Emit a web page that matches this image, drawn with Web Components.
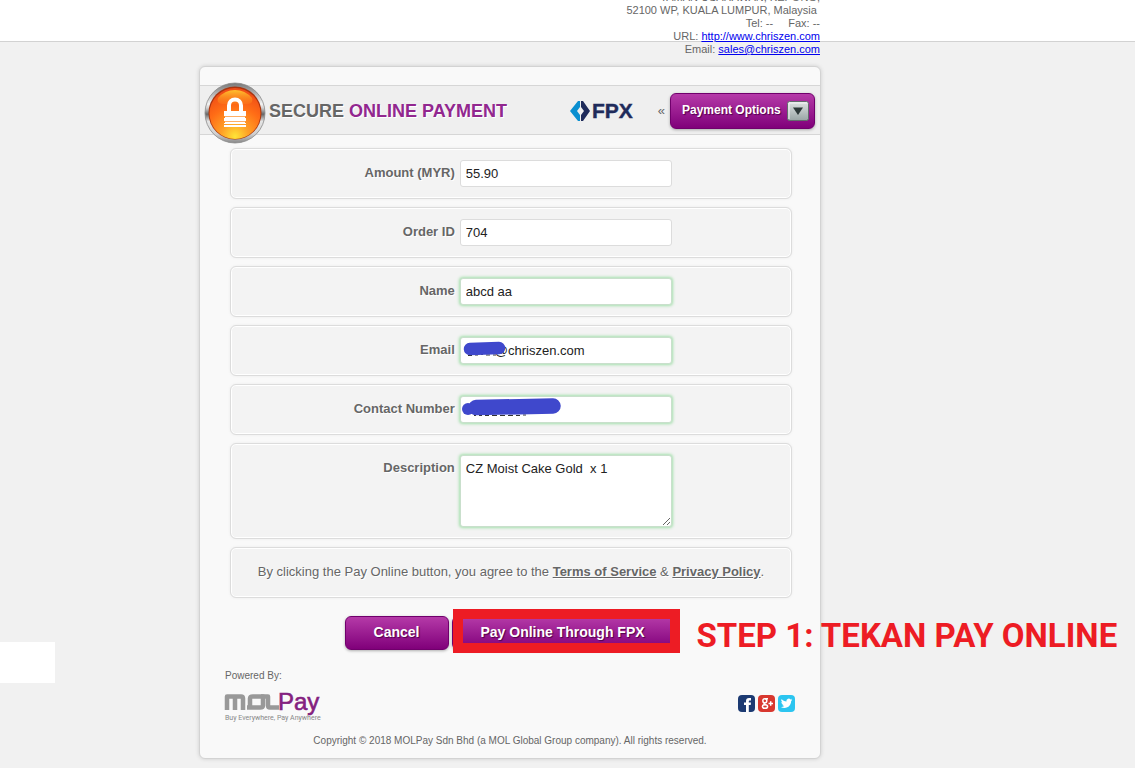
<!DOCTYPE html>
<html lang="en">
<head>
<meta charset="utf-8">
<meta name="viewport" content="width=device-width, initial-scale=1">
<title>Secure Online Payment</title>
<style>
  html { background: #f1f1f1; }
  body {
    margin: 0;
    color: #666;
    font: 13px/16px "Liberation Sans", Arial, sans-serif;
    background: linear-gradient(#fff 41px, #d2d2d2 41px, #d2d2d2 42px, #f1f1f1 42px);
    overflow-x: hidden;
  }
</style>
</head>
<body>
<pay-page>
  <merchant-info></merchant-info>
  <pay-card>
    <card-heading></card-heading>
    <form-row label="Amount (MYR)" value="55.90"></form-row>
    <form-row label="Order ID" value="704"></form-row>
    <form-row label="Name" value="abcd aa" valid></form-row>
    <form-row label="Email" value="@chriszen.com" valid masked>
      <svg width="52" height="18" viewBox="0 0 52 18" aria-hidden="true"><path d="M8 14.500h4M15 14h3M21 13.500h2M26 14h4M33 14h3" stroke="#333"/><path d="M10 8L39 7" stroke="#3f48cc" stroke-width="12.500" stroke-linecap="round"/></svg>
    </form-row>
    <form-row label="Contact Number" value="" valid>
      <svg width="110" height="24" viewBox="0 0 110 24" aria-hidden="true"><path d="M14 15.500h2M19 15.500h3M25 15.500h4M32 15.500h5M40 15.500h5M48 15.500h5M56 15.500h4M63 15h3" stroke="#333"/><path d="M16 7.500L93 6" stroke="#3f48cc" stroke-width="15.500" stroke-linecap="round" fill="none"/><circle cx="8" cy="9" r="6" fill="#3f48cc"/></svg>
    </form-row>
    <form-row label="Description" value="CZ Moist Cake Gold  x 1" valid multiline></form-row>
    <agree-row></agree-row>
    <pay-actions><step-note>STEP 1: TEKAN PAY ONLINE</step-note></pay-actions>
    <card-footer></card-footer>
  </pay-card>
</pay-page>
<side-tab></side-tab>

<script>
function define(name, html, setup) {
  customElements.define(name, class extends HTMLElement {
    constructor() {
      super();
      this.attachShadow({ mode: 'open' }).innerHTML = html;
    }
    connectedCallback() {
      if (setup && !this.ready) { this.ready = true; setup(this, this.shadowRoot); }
    }
  });
}

const buttonCss = `
  button {
    box-sizing: border-box; margin: 0; color: #fff; border: 1px solid #70006c; border-radius: 6px;
    background: linear-gradient(#b53aa8, #80007a);
    font: bold 14px/16px "Liberation Sans", Arial, sans-serif;
    text-shadow: 1px 1px 1px #50004c; box-shadow: 0 1px 3px rgba(0,0,0,.3); cursor: pointer;
  }`;

define('pay-page', `
  <style>
    :host { display: block; padding: 0 115px 10px 0; }
    div { max-width: 622px; margin: 0 auto; }
  </style>
  <div><slot></slot></div>`);

define('merchant-info', `
  <style>
    :host { display: block; margin: -9px 0 10px; padding-right: 1px; text-align: right; font-size: 11px; line-height: 13px; }
    address { font-style: normal; }
    a { color: #00e; }
    .gap { padding-left: 12px; }
  </style>
  <address>
    TAMAN USAHAWAN, KEPONG,<br>
    52100 WP, KUALA LUMPUR, Malaysia&nbsp;<br>
    Tel: -- <span class="gap">Fax: --</span><br>
    URL: <a href="http://www.chriszen.com">http://www.chriszen.com</a><br>
    Email: <a href="mailto:sales@chriszen.com">sales@chriszen.com</a>
  </address>`);

define('pay-card', `
  <style>
    :host {
      display: block; box-sizing: border-box; padding-top: 18px; background: #f9f9f9;
      border: 1px solid #d3d3d3; border-radius: 6px; box-shadow: 0 0 4px rgba(0,0,0,.15);
    }
  </style>
  <slot></slot>`);

define('card-heading', `
  <style>
    :host {
      display: flex; align-items: center; box-sizing: border-box; height: 50px; margin-bottom: 13px; padding: 2px 5px 0;
      background: #efefef; border: solid #d6d6d6; border-width: 1px 0;
    }
    .lock { flex: none; margin: 0 3px 0 -1px; position: relative; top: 2px; }
    h1 { margin: 0 auto 0 0; font-size: 18px; line-height: 24px; text-shadow: 1px 1px 0 #fff; white-space: nowrap; }
    h1 span { color: #92278f; }
    .fpx { flex: none; margin-right: 24px; }
    .back { margin-right: 5px; font-size: 13px; }
    ${buttonCss}
    button { display: flex; align-items: center; justify-content: space-between; width: 145px; height: 36px; padding: 0 5px 0 11px; font-size: 12px; }
    button span { padding-bottom: 2px; }
  </style>
  <svg class="lock" width="62" height="62" viewBox="0 0 62 62" aria-hidden="true">
    <defs>
      <linearGradient id="rim" x1="0" y1="0" x2="0" y2="1"><stop offset="0" stop-color="#777"/><stop offset=".15" stop-color="#aaa"/><stop offset=".35" stop-color="#f4f4f4"/><stop offset=".42" stop-color="#ccc"/><stop offset=".52" stop-color="#666"/><stop offset=".64" stop-color="#e4e4e4"/><stop offset=".85" stop-color="#d0d0d0"/><stop offset="1" stop-color="#888"/></linearGradient>
      <radialGradient id="disc" cx=".5" cy=".95" r=".9"><stop offset="0" stop-color="#ffe437"/><stop offset=".3" stop-color="#ffa126"/><stop offset=".65" stop-color="#ff6d16"/><stop offset="1" stop-color="#f04d16"/></radialGradient>
      <linearGradient id="gloss" x1="0" y1="0" x2="0" y2="1"><stop offset="0" stop-color="#ffc22e"/><stop offset="1" stop-color="#ff8a1c" stop-opacity=".3"/></linearGradient>
    </defs>
    <circle cx="31" cy="31" r="30" fill="url(#rim)" stroke="#8a8a8a" stroke-width=".8"/>
    <circle cx="31" cy="31" r="26.500" fill="#a9340f"/>
    <circle cx="31" cy="31.500" r="25.500" fill="url(#disc)"/>
    <path d="M14 16Q21 8 31 8T48 16Q50 21 44 22H18Q12 21 14 16Z" fill="url(#gloss)"/>
    <path d="M25 30V23.500A6 6 0 0 1 37 23.500V30" fill="none" stroke="#fff" stroke-width="4"/>
    <path d="M20 29h22v5h-1v2h1v3h-1v2h1v1H20v-1h1v-2h-1v-3h1v-2h-1zM20 43h22v2H20z" fill="#fff"/>
    <path d="M20 34.500h22M20 39.500h22" stroke="#ff9a3c" stroke-width=".8"/>
  </svg>
  <h1>SECURE <span>ONLINE PAYMENT</span></h1>
  <svg class="fpx" width="64" height="24" viewBox="0 0 64 24" role="img" aria-label="FPX">
    <path d="M8 2H10V8L7 12L10 16V22H8L0 12Z" fill="#0a8fd0"/>
    <path d="M13 2H11V8L14 12L11 16V22H13L20 12Z" fill="#1f2b5b"/>
    <text x="22" y="19" font-family="Liberation Sans, Arial, sans-serif" font-weight="bold" font-size="21" fill="#1f2b5b" stroke="#1f2b5b" stroke-width=".4">FPX</text>
  </svg>
  <span class="back">«</span>
  <button type="button"><span>Payment Options</span>
    <svg width="22" height="20" viewBox="0 0 22 20" aria-hidden="true">
      <defs><linearGradient id="key" x1="0" y1="0" x2="0" y2="1"><stop offset="0" stop-color="#dfe3e3"/><stop offset="1" stop-color="#99a5a5"/></linearGradient></defs>
      <rect x=".5" y=".5" width="21" height="19" rx="2" fill="url(#key)" stroke="#626c6c"/>
      <path d="M2 18V2H20" fill="none" stroke="#f4f6f6"/>
      <path d="M6 6.500H16L11 14Z" fill="#2d3838"/>
    </svg>
  </button>`);

const rowCss = `
  :host {
    display: block; box-sizing: border-box; min-height: 51px; margin: 0 28px 8px 30px;
    background: #f3f3f3; border: 1px solid #dcdcdc; border-radius: 6px;
    box-shadow: inset 0 0 0 1px #fff, 0 0 3px rgba(0,0,0,.06); text-shadow: 1px 1px 0 #fff;
  }`;

define('form-row', `
  <style>
    ${rowCss}
    .grid { display: grid; grid-template-columns: 2fr 3fr; column-gap: 5px; padding: 11px 0 11px 3px; }
    label { padding-top: 5px; text-align: right; font-weight: bold; }
    .box { position: relative; width: 212px; }
    .field {
      display: block; box-sizing: border-box; width: 100%; height: 27px; margin: 0; padding: 0 5px;
      border: 1px solid #dcdcdc; border-radius: 3px; outline: 0; background: #fff; color: #222;
      font: 13px/16px "Liberation Sans", Arial, sans-serif;
    }
    textarea.field { height: 72px; padding: 5px; resize: both; }
    :host([valid]) .field { box-shadow: 0 0 3px 1px #a5e0ad; border-color: #c9dfcc; }
    :host([masked]) .field { padding-left: 34px; }
    ::slotted(svg) { position: absolute; left: 0; top: 4px; overflow: visible; }
  </style>
  <div class="grid"><label for="f"></label><div class="box"><slot></slot></div></div>`,
  (host, root) => {
    const multi = host.hasAttribute('multiline');
    const field = document.createElement(multi ? 'textarea' : 'input');
    field.id = 'f';
    field.className = 'field';
    if (!multi) field.type = 'text';
    field.value = host.getAttribute('value');
    root.querySelector('label').textContent = host.getAttribute('label');
    root.querySelector('.box').prepend(field);
  });

define('agree-row', `
  <style>
    ${rowCss}
    p { margin: 0; padding: 16px 8px; text-align: center; }
    a { color: #666; font-weight: bold; }
  </style>
  <p>By clicking the Pay Online button, you agree to the <a href="#terms">Terms of Service</a> &amp; <a href="#privacy">Privacy Policy</a>.</p>`);

define('pay-actions', `
  <style>
    :host { display: flex; justify-content: center; gap: 3px; margin-top: 18px; padding-right: 2px; }
    ${buttonCss}
    button { height: 34px; padding: 0 6px 2px; }
    .cancel { width: 104px; }
    .pay { width: 222px; }
    .target { position: relative; }
    .frame { position: absolute; left: 1px; top: -7px; box-sizing: border-box; width: 227px; height: 44px; border: 10px solid #ed1c24; pointer-events: none; }
  </style>
  <button class="cancel" type="button">Cancel</button>
  <div class="target"><button class="pay" type="submit">Pay Online Through FPX</button><div class="frame"></div><slot></slot></div>`);

define('step-note', `
  <style>
    :host {
      position: absolute; left: 245px; top: -2px; color: #ed1c24; white-space: nowrap;
      font: bold 33px/44px Roboto, "Liberation Sans", sans-serif;
    }
  </style>
  <slot></slot>`);

define('card-footer', `
  <style>
    :host { display: block; padding: 18px 25px 9px; font-size: 10px; line-height: 16px; }
    .row { display: flex; align-items: flex-start; justify-content: space-between; margin-top: 8px; }
    nav { display: flex; gap: 3px; padding: 3px 0 0; }
    a, svg { display: block; overflow: visible; }
    p { margin: 0; }
    .copy { margin-top: 9px; text-align: center; }
  </style>
  <p>Powered By:</p>
  <div class="row">
    <svg width="104" height="32" viewBox="0 0 104 32" role="img" aria-label="MOLPay">
      <g fill="none" stroke="#999" stroke-width="4.500" stroke-linejoin="round">
        <path d="M2 18V4.500H16Q18 4.500 18 6.500V18M10 4.500V18"/>
        <path d="M25 15.500V6.500Q25 4.500 28 4.500H38V13.500Q38 15.500 35 15.500H22"/>
        <path d="M36 4.500H43V13.500Q43 15.500 45 15.500H54"/>
      </g>
      <text x="53" y="18" font-family="Liberation Sans, Arial, sans-serif" font-size="24" fill="#84217f" stroke="#84217f" stroke-width=".6">Pay</text>
      <text x="0" y="28" font-family="Roboto, sans-serif" font-size="7" fill="#888">Buy Everywhere, Pay Anywhere</text>
    </svg>
    <nav>
      <a href="#facebook" aria-label="Facebook"><svg width="17" height="17" viewBox="0 0 17 17"><rect width="17" height="17" rx="4" fill="#1c3a72"/><path d="M8 17V10H6V7.500H8V6Q8 3 11 3H13V5.500H11.500Q10.800 5.500 10.800 6.300V7.500H13L12.700 10H10.800V17Z" fill="#fff"/></svg></a>
      <a href="#google" aria-label="Google Plus"><svg width="17" height="17" viewBox="0 0 17 17"><rect width="17" height="17" rx="4" fill="#d8382f"/><g fill="none" stroke="#fff" stroke-width="1.500"><ellipse cx="6.800" cy="5.800" rx="2" ry="2.100"/><path d="M7 3.700H10M7 8Q5 9 7.500 9.800"/><ellipse cx="7" cy="11.500" rx="2.600" ry="1.800"/><path d="M10.500 8.500H15M12.700 6.300V10.700"/></g></svg></a>
      <a href="#twitter" aria-label="Twitter"><svg width="17" height="17" viewBox="0 0 17 17"><rect width="17" height="17" rx="4" fill="#2cc5f0"/><path transform="translate(2.800 2.600) scale(.48)" fill="#fff" d="M23.950 4.570a10 10 0 0 1-2.820.77 4.960 4.960 0 0 0 2.160-2.720c-.95.550-2 .960-3.130 1.180a4.920 4.920 0 0 0-8.380 4.480C7.690 8.090 4.070 6.130 1.640 3.160a4.920 4.920 0 0 0 1.520 6.570 4.900 4.900 0 0 1-2.230-.61v.06c0 2.380 1.700 4.370 3.950 4.830a5 5 0 0 1-2.210.08 4.940 4.940 0 0 0 4.600 3.420A9.870 9.870 0 0 1 0 19.540a13.990 13.990 0 0 0 7.550 2.210c9.050 0 14-7.500 14-13.980v-.64a9.900 9.900 0 0 0 2.400-2.560z"/></svg></a>
    </nav>
  </div>
  <p class="copy">Copyright © 2018 MOLPay Sdn Bhd (a MOL Global Group company). All rights reserved.</p>`);

define('side-tab', `
  <style>:host { position: absolute; left: 0; top: 642px; width: 55px; height: 41px; background: #fff; }</style>`);
</script>
</body>
</html>
